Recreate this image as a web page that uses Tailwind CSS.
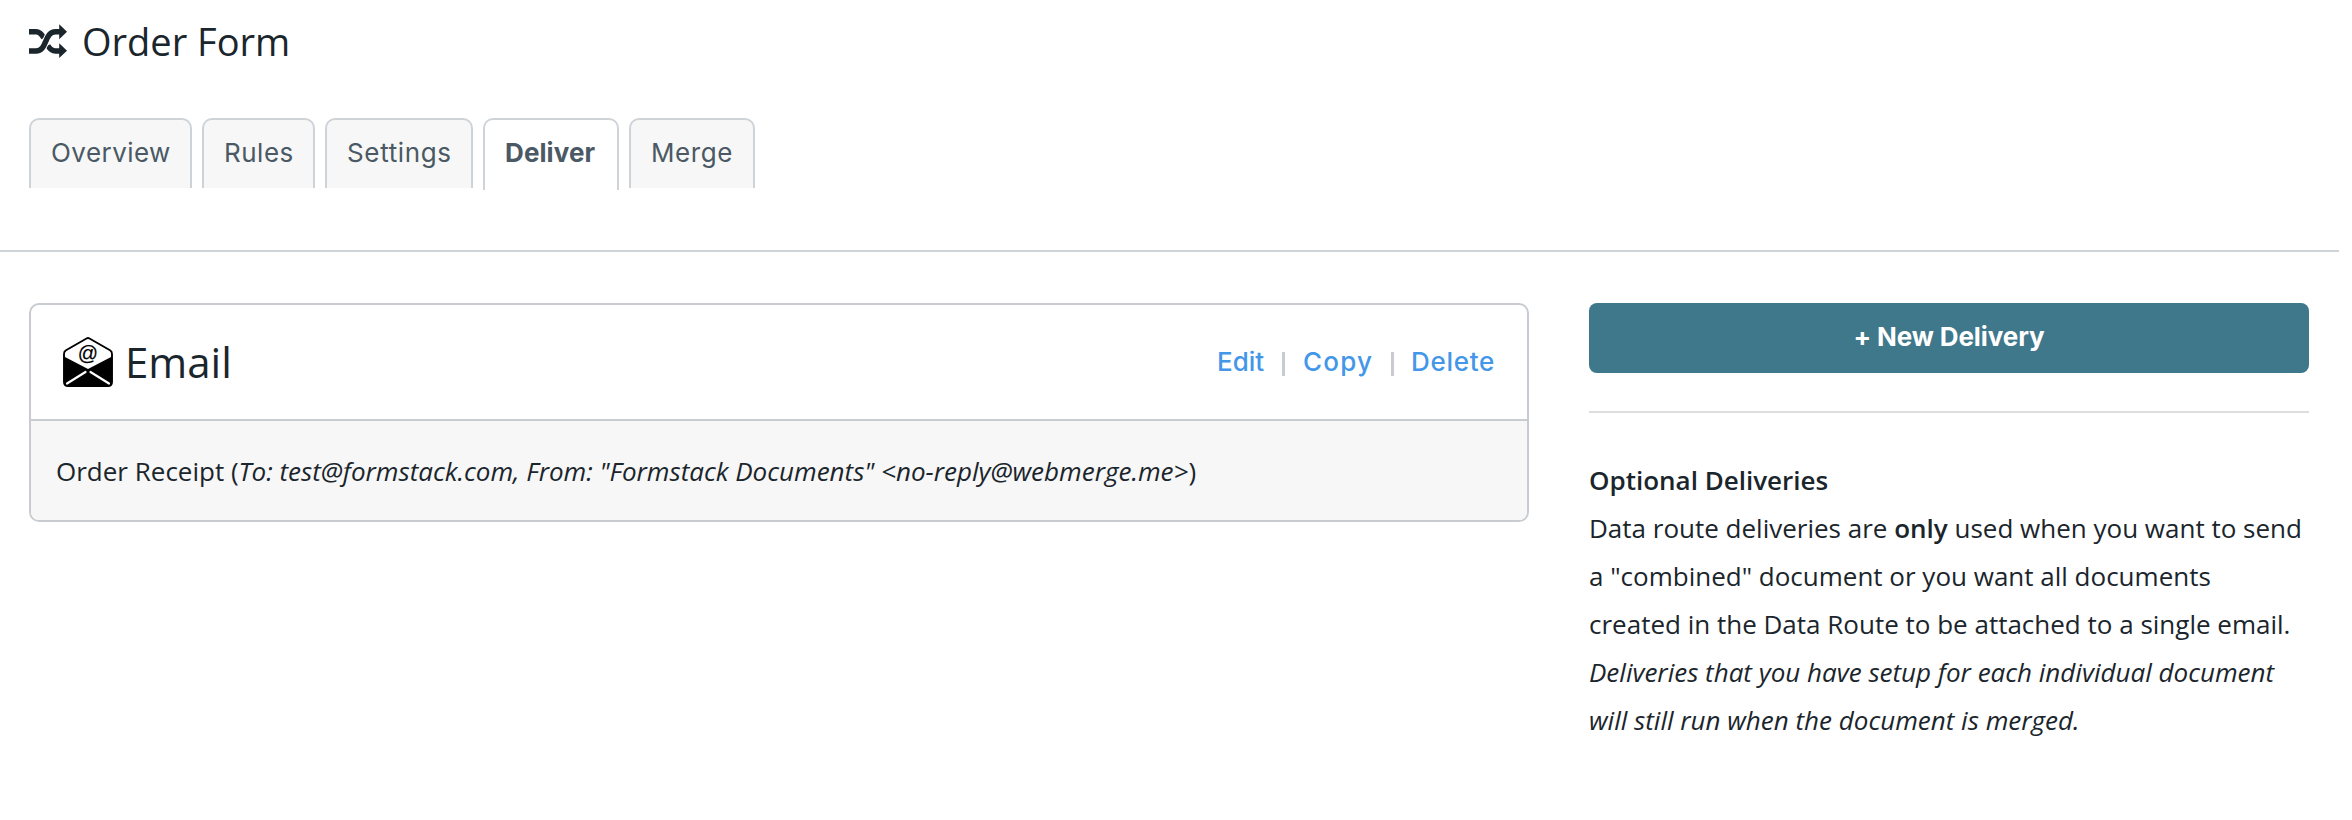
<!DOCTYPE html>
<html lang="en">

<head>
    <meta charset="UTF-8">
    <meta name="viewport" content="width=device-width, initial-scale=1.0">
    <title>Order Form</title>
    <script src="https://cdn.jsdelivr.net/npm/@tailwindcss/browser@4"></script>
</head>

<body class="bg-white text-[#1a252c] font-['Open_Sans',sans-serif] text-[26px] leading-[48px]">

    <header class="w-[2339px] h-[252px] border-b-2 border-[#ced3d8] pl-[29px] pt-[13px]">
        <h1 class="flex items-start h-[105px] text-[38px] leading-[56px]">
            <svg class="w-[38px] h-[34px] mt-[11px] mr-[15px]" viewBox="0 0 38 34" fill="none" stroke="#1a252c" stroke-width="5.4">
                <path d="M0 7.7H7C11 7.7 13 10.5 14.8 14" />
                <path d="M18.8 21.5C20.5 24.5 22.5 27 26.5 27H31" />
                <path d="M7 27C18.5 27 15 7.7 26.500 7.7" stroke="#fff" stroke-width="7.4" />
                <path d="M0 27H7C18.5 27 15 7.7 26.5 7.7H31" />
                <path d="M30.2 0.3L38 7.7L30.2 15.3Z M30.2 19.3L38 26.8L30.2 34Z" fill="#1a252c" stroke="none" />
            </svg>
            Order Form
        </h1>

        <nav class="flex items-start gap-[10px] font-[Inter,sans-serif] leading-[40px] text-[#4a5964]">
            <a class="w-[163px] h-[70px] pl-5 pt-[13px] bg-[#f7f7f7] border-2 border-b-0 border-[#ced3d8] rounded-t-[10px] tracking-[0.45px]">Overview</a>
            <a class="w-[113px] h-[70px] pl-5 pt-[13px] bg-[#f7f7f7] border-2 border-b-0 border-[#ced3d8] rounded-t-[10px] tracking-[0.5px]">Rules</a>
            <a class="w-[148px] h-[70px] pl-5 pt-[13px] bg-[#f7f7f7] border-2 border-b-0 border-[#ced3d8] rounded-t-[10px] tracking-[0.65px]">Settings</a>
            <a class="w-[136px] h-[72px] pl-5 pt-[13px] bg-white border-2 border-b-0 border-[#ced3d8] rounded-t-[10px] font-bold tracking-[0.1px]">Deliver</a>
            <a class="w-[126px] h-[70px] pl-5 pt-[13px] bg-[#f7f7f7] border-2 border-b-0 border-[#ced3d8] rounded-t-[10px] tracking-[0.6px]">Merge</a>
        </nav>
    </header>

    <main class="flex items-start gap-[60px] pl-[29px] pt-[51px]">
        <!-- delivery -->
        <section class="w-[1500px] h-[219px] border-2 border-[#c8ccd0] rounded-[10px] overflow-hidden">
            <div class="flex items-center h-[116px] border-b-2 border-[#c8ccd0] pl-8 pr-[33px]">
                <svg class="w-[50px] h-[50px]" viewBox="0 0 50 50">
                    <path d="M1 17Q1 14.5 3 13.3L23.5 1.5Q25 0.6 26.5 1.5L47 13.3Q49 14.5 49 17V45Q49 49 45 49H5Q1 49 1 45Z" fill="#fff" stroke="#000" stroke-width="1.9" />
                    <path d="M1 19.5L25 32L49 19.5V45Q49 49 45 49H5Q1 49 1 45Z" />
                    <path d="M4 46.5L22.5 35M46 46.5L27.5 35" stroke="#fff" stroke-width="2.2" stroke-linecap="round" />
                    <text x="25" y="22.5" text-anchor="middle" font-family="Liberation Sans, sans-serif" font-size="20" stroke="#000" stroke-width="0.2">@</text>
                </svg>
                <h2 class="ml-3 text-[42px] leading-[56px]">Email</h2>
                <div class="flex items-center ml-auto font-[Inter,sans-serif] font-medium leading-[40px] text-[#4396e8]">
                    <a class="w-[65px]">Edit</a>
                    <span class="w-[3px] h-[24px] mt-[3px] bg-[#c8ccd0]"></span>
                    <a class="w-[106px] pl-[18px] tracking-[1.2px]">Copy</a>
                    <span class="w-[3px] h-[24px] mt-[3px] bg-[#c8ccd0]"></span>
                    <a class="w-[100px] pl-[17px] tracking-[0.7px]">Delete</a>
                </div>
            </div>
            <div class="h-[99px] pl-[25px] pt-[26px] bg-[#f7f7f7]">Order Receipt (<i>To: test@formstack.com, From: "Formstack Documents" &lt;no-reply@webmerge.me&gt;</i>)</div>
        </section>

        <aside class="w-[720px]">
            <button class="block w-full h-[70px] pb-[2px] bg-[#3f788b] rounded-[8px] text-white text-center font-[Inter,sans-serif] font-bold tracking-[-0.1px]">+ New Delivery</button>
            <hr class="mt-[38px] mb-[43px] border-0 border-t-2 border-[#dddddd]">
            <p>
                <b class="font-semibold">Optional Deliveries</b><br>
                Data route deliveries are <b class="font-semibold">only</b> used when you want to send a "combined" document or you want all documents created in the Data Route to be attached to a single email. <i>Deliveries that you have setup for each individual document will still run when the document is merged.</i>
            </p>
        </aside>
    </main>

</body>

</html>
